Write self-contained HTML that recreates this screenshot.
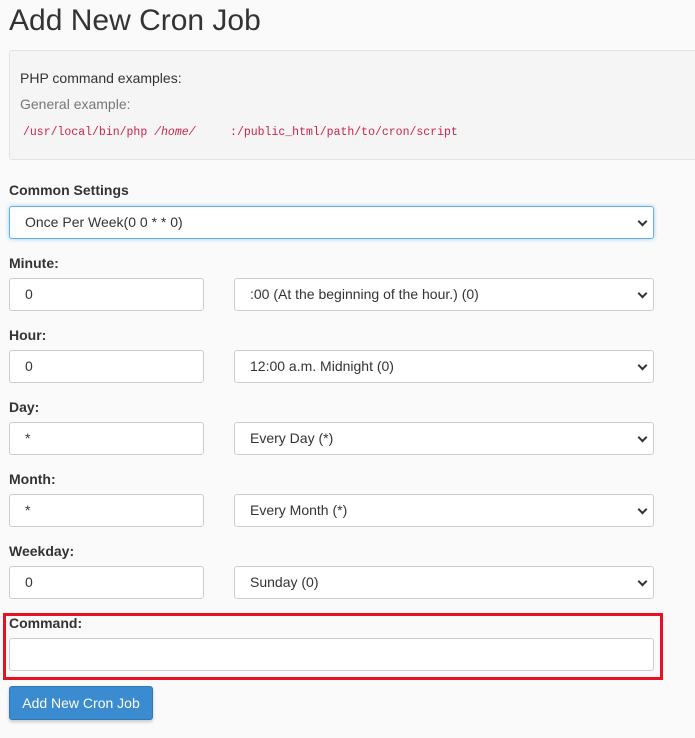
<!DOCTYPE html>
<html><head><style>
body{margin:0;width:695px;height:738px;background:#fafafa;font-family:"Liberation Sans",sans-serif;color:#333;position:relative;overflow:hidden}
.a{position:absolute}
h1{position:absolute;left:9px;top:4px;margin:0;font-weight:normal;font-size:30px;color:#333}
.well{left:9px;top:50px;width:700px;height:110px;background:#f5f5f5;border:1px solid #e3e3e3;border-radius:3px;box-sizing:border-box}
.lbl{font-size:14px;font-weight:bold;color:#333;left:9px}
.in{background:#fff;border:1px solid #ccc;border-radius:3px;box-sizing:border-box;height:33px;font-size:14px;line-height:31px;padding-left:15px;color:#333}
.sel{left:234px;width:420px}
.sel:after{content:"";position:absolute;right:7px;top:11px;width:5px;height:5px;border-right:2px solid #333;border-bottom:2px solid #333;transform:rotate(45deg)}
.num{left:9px;width:195px}
</style></head><body>
<h1>Add New Cron Job</h1>
<div class="a well">
<div class="a" style="left:10px;top:19px;font-size:14px">PHP command examples:</div>
<div class="a" style="left:10px;top:45px;font-size:14px;color:#777">General example:</div>
<div class="a" style="left:13px;top:75px;font-family:'Liberation Mono',monospace;font-size:11.5px;color:#c7254e">/usr/local/bin/php <i>/home/</i>&nbsp;&nbsp;&nbsp;&nbsp;&nbsp;:/public_html/path/to/cron/script</div>
</div>
<div class="a lbl" style="top:182px">Common Settings</div>
<div class="a in sel" style="left:9px;width:645px;top:206px;border-color:#66afe9;box-shadow:0 0 4px rgba(102,175,233,.6)">Once Per Week(0 0 * * 0)</div>

<div class="a lbl" style="top:255px">Minute:</div>
<div class="a in num" style="top:278px">0</div>
<div class="a in sel" style="top:278px">:00 (At the beginning of the hour.) (0)</div>

<div class="a lbl" style="top:327px">Hour:</div>
<div class="a in num" style="top:350px">0</div>
<div class="a in sel" style="top:350px">12:00 a.m. Midnight (0)</div>

<div class="a lbl" style="top:399px">Day:</div>
<div class="a in num" style="top:422px">*</div>
<div class="a in sel" style="top:422px">Every Day (*)</div>

<div class="a lbl" style="top:471px">Month:</div>
<div class="a in num" style="top:494px">*</div>
<div class="a in sel" style="top:494px">Every Month (*)</div>

<div class="a lbl" style="top:543px">Weekday:</div>
<div class="a in num" style="top:566px">0</div>
<div class="a in sel" style="top:566px">Sunday (0)</div>

<div class="a" style="left:3px;top:613px;width:660px;height:67px;border:3px solid #e81123;box-sizing:border-box"></div>
<div class="a lbl" style="top:615px">Command:</div>
<div class="a in" style="left:9px;width:645px;top:638px"></div>

<div class="a" style="left:9px;top:686px;width:144px;height:34px;background:#3a8bd0;border:1px solid #2f78b8;border-radius:3px;box-sizing:border-box;color:#fff;font-size:14px;line-height:32px;text-align:center;box-shadow:0 2px 3px rgba(0,0,0,.2)">Add New Cron Job</div>
</body></html>
